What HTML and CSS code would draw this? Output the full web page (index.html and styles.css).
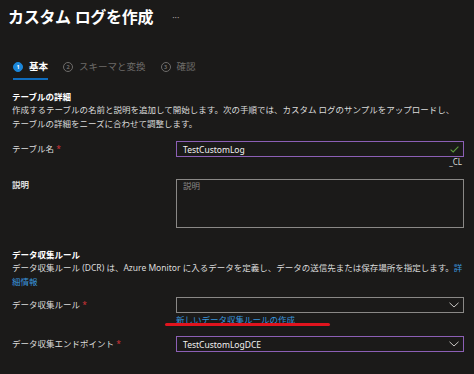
FILE: index.html
```html
<!DOCTYPE html>
<html lang="ja">

<head>
    <meta charset="UTF-8" />
    <meta name="viewport" content="width=device-width, initial-scale=1.0" />
    <title>カスタム ログを作成</title>
    <link rel="stylesheet" href="styles.css">
</head>

<body>

    <header class="title-bar">
        <h1>カスタム ログを作成</h1>
        <span class="more">···</span>
    </header>

    <nav class="steps">
        <div class="step active"><span class="num">1</span>基本</div>
        <div class="step"><span class="num">2</span>スキーマと変換</div>
        <div class="step"><span class="num">3</span>確認</div>
    </nav>

    <section class="group">
        <h2>テーブルの詳細</h2>
        <p class="desc">作成するテーブルの名前と説明を追加して開始します。次の手順では、カスタム ログのサンプルをアップロードし、<br>テーブルの詳細をニーズに合わせて調整します。</p>

        <div class="field first">
            <label>テーブル名 <span class="req">*</span></label>
            <div class="control">
                <div class="input valid">
                    <span>TestCustomLog</span>
                    <svg width="9" height="7" viewBox="0 0 9 7">
                        <path d="M0.6 3.6 L3.2 6 L8.4 0.6" fill="none" stroke="#5f9b3e" stroke-width="1.1" />
                    </svg>
                </div>
            </div>
        </div>
        <div class="suffix">_CL</div>

        <div class="field top">
            <label class="strong">説明</label>
            <div class="control">
                <div class="textarea">説明</div>
            </div>
        </div>
    </section>

    <section class="group second">
        <h2>データ収集ルール</h2>
        <p class="desc">データ収集ルール (DCR) は、Azure Monitor に入るデータを定義し、データの送信先または保存場所を指定します。<a href="#">詳<br>細情報</a></p>

        <div class="field rule">
            <label>データ収集ルール <span class="req">*</span></label>
            <div class="control">
                <div class="input select">
                    <span></span>
                    <svg width="10" height="6" viewBox="0 0 10 6">
                        <path d="M0.5 0.8 L5 5 L9.5 0.8" fill="none" stroke="#c8c6c4" stroke-width="1" />
                    </svg>
                </div>
            </div>
        </div>
        <div class="new-link">
            <a href="#">新しいデータ収集ルールの作成</a>
            <span class="marker"></span>
        </div>

        <div class="field endpoint">
            <label>データ収集エンドポイント <span class="req">*</span></label>
            <div class="control">
                <div class="input select valid">
                    <span>TestCustomLogDCE</span>
                    <svg width="10" height="6" viewBox="0 0 10 6">
                        <path d="M0.5 0.8 L5 5 L9.5 0.8" fill="none" stroke="#c8c6c4" stroke-width="1" />
                    </svg>
                </div>
            </div>
        </div>
    </section>

</body>

</html>
```

FILE: styles.css
```css
* {
    box-sizing: border-box;
    margin: 0;
    padding: 0;
    font-family: "Noto Sans", "Noto Sans CJK JP", sans-serif;
}

body {
    background: #1b1a19;
    color: #dcdcdc;
    font-size: 8.5px;
    width: 474px;
    height: 374px;
    overflow: hidden;
}

.title-bar {
    display: flex;
    align-items: center;
    padding: 7px 0 0 8px;
    height: 27px;
}

.title-bar h1 {
    font-size: 16px;
    line-height: 20px;
    font-weight: 700;
    color: #ffffff;
    letter-spacing: -0.3px;
}

.more {
    margin-left: 19px;
    color: #a19f9d;
    font-size: 9px;
    letter-spacing: 0;
}

.steps {
    display: flex;
    gap: 15px;
    margin: 33px 0 0 13px;
}

.step {
    display: flex;
    align-items: center;
    gap: 6px;
    font-size: 9.5px;
    line-height: 14px;
    padding-bottom: 4px;
    border-bottom: 2px solid transparent;
    color: #6e6c6a;
}

.step.active {
    color: #ffffff;
    font-weight: 700;
    border-bottom-color: #0f6cbd;
}

.num {
    width: 10px;
    height: 10px;
    border-radius: 50%;
    border: 1px solid #6e6c6a;
    font-size: 5.5px;
    line-height: 8px;
    text-align: center;
    font-weight: 700;
}

.step.active .num {
    background: #1b86d9;
    border-color: #1b86d9;
    color: #ffffff;
}

.group {
    padding: 0 10px 0 12px;
    margin-top: 11px;
}

.group.second {
    margin-top: 21px;
}

.group h2 {
    font-size: 8.5px;
    line-height: 12px;
    font-weight: 700;
    color: #ffffff;
}

.desc {
    line-height: 14px;
    color: #dcdcdc;
}

a {
    color: #3a96dd;
    text-decoration: none;
}

.field {
    display: flex;
    align-items: center;
}

.field.first {
    margin-top: 10px;
}

.field.top {
    align-items: flex-start;
    margin-top: 12px;
}

.field.rule {
    margin-top: 8px;
}

.field.endpoint {
    margin-top: 9px;
}

.field label {
    width: 164px;
    line-height: 12px;
    color: #dcdcdc;
}

.field label.strong {
    font-weight: 700;
}

.req {
    color: #d13438;
}

.control {
    width: 288px;
}

.input {
    height: 16px;
    border: 1px solid #8a8886;
    display: flex;
    align-items: center;
    justify-content: space-between;
    padding: 0 4px 0 6px;
    color: #f3f2f1;
}

.input.valid {
    border-color: #8c5fb5;
}

.suffix {
    text-align: right;
    line-height: 10px;
    font-size: 8px;
    padding-right: 2px;
    color: #dcdcdc;
}

.textarea {
    height: 49px;
    border: 1px solid #8a8886;
    padding: 0 6px;
    line-height: 12px;
    color: #8a8886;
}

.new-link {
    position: relative;
    margin-left: 164px;
    line-height: 14px;
}

.marker {
    position: absolute;
    left: -11px;
    top: 10px;
    width: 165px;
    height: 3px;
    border-radius: 2px;
    background: #e0141e;
}
```
